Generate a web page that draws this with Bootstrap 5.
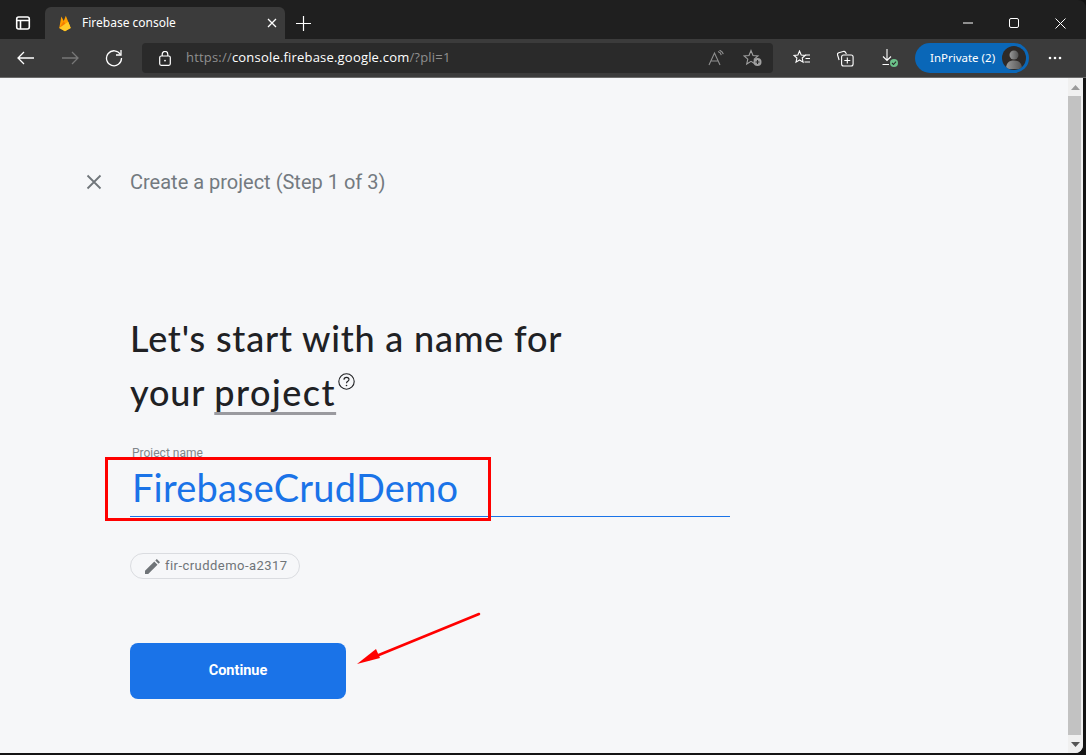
<!DOCTYPE html>
<html lang="en"><head><meta charset="utf-8"><title>Firebase console</title>
<link href="https://cdn.jsdelivr.net/npm/bootstrap@5.3.0/dist/css/bootstrap.min.css" rel="stylesheet">
<style>
html,body{height:755px;overflow:hidden;margin:0;background:#141414}
.win{width:1086px;height:755px;position:relative;overflow:hidden;font-family:"Noto Sans",sans-serif}
.tabrow{height:39px;background:#1f1f1f;padding-top:7px;border-top-right-radius:8px}
.tabicon{width:45px;height:32px;background:#1f1f1f}
.browsertab{width:240px;height:32px;background:#3b3b3b;border-radius:6px 6px 0 0;color:#fff;font-size:12px;padding:0 8px 0 12px}
.browsertab span{margin-left:9px;margin-top:-1px}
.newtab{width:36px;height:32px}
.winbtns{margin-left:auto;padding-right:3px;height:32px}
.winbtn{width:46px;height:32px}
.toolbar{background:#3b3b3b;border-bottom:1px solid #6b6b6b;box-sizing:content-box;padding:4px 0 0 0;height:34px}
.navbtn{width:44px;height:30px;flex:none}
.addr{width:631px;height:30px;background:#2a2a2a;border-radius:4px;flex:none;font-family:"Open Sans",sans-serif;font-size:13px;color:#8f8f8f;margin-left:6px;padding:0 10px 0 17px}
.addr b{font-weight:400;color:#fff}
.urltxt{margin-left:15px;letter-spacing:.015em}
.tool{width:44px;height:30px;flex:none}
.firsttool{margin-left:7px}
.privpill{width:114px;height:30px;background:#0a67b8;border-radius:15px;color:#fff;font-size:11.5px;padding:0 3px 0 15px;flex:none;margin-left:3px}
.ava{width:24px;height:24px;border-radius:50%;background:#2e2a28;margin-left:auto;overflow:hidden}
.pagewrap{height:675px;background:#f6f7f9;border-radius:0 0 8px 0;margin-right:3px}
.pagemain{flex:1;padding:0 0 0 130px;font-family:Roboto,sans-serif;position:relative}
.sbar{width:15px;background:#f0f0f0;flex:none;border-bottom-right-radius:8px}
.sthumb{flex:1;background:#c2c2c2;margin:0 2px 0 0}
.sarrow{height:18px;flex:none}
.steprow{height:22px;margin-top:93px;color:#737a80;font-size:20px;line-height:22px}
.closex{position:absolute;left:86px;top:96px}
.headline{margin:118px 0 0;font-family:Lato,sans-serif;font-weight:500;font-size:36px;line-height:54px;color:#202124;width:480px;letter-spacing:.8px}
.headline .hline{display:block}
.headline u{letter-spacing:1.5px;text-decoration:underline;text-decoration-color:#9a9a9f;text-decoration-thickness:3px;text-underline-offset:6px;text-decoration-skip-ink:none}
.headline svg{vertical-align:16px;margin-left:2px}
.fieldlabel{font-size:12px;color:#80868b;line-height:14px;margin-top:27px;padding-left:2px}
.fieldval{width:600px;height:57px;border-bottom:1px solid #1a73e8;color:#1a73e8;font-family:Lato,sans-serif;font-size:38px;line-height:44px;padding:5px 0 0 2px;letter-spacing:.2px}
.idchip{display:inline-flex;align-items:center;height:26px;border:1px solid #dadce0;border-radius:13px;margin-top:36px;padding:0 11px 0 14px;font-size:13px;font-weight:400;color:#6f7478;letter-spacing:.035em}
.idchip span{margin-left:5px}
.gobtn{display:block;width:216px;height:56px;background:#1a73e8;border:0;border-radius:8px;color:#fff;font-size:14.5px;font-weight:700;margin-top:62px}
.gobtn:hover{background:#1a73e8;color:#fff}
.redbox{position:absolute;left:105px;top:379px;width:386px;height:64px;border:3px solid #f00;pointer-events:none}
.arrow{position:absolute;left:353px;top:533px}
</style></head><body>
<div class="win">
<div class="tabrow d-flex">
 <div class="tabicon d-flex align-items-center justify-content-center"><svg width="16" height="16" viewBox="0 0 16 16" fill="none" stroke="#fff" stroke-width="1.6"><rect x="1.7" y="2" width="12.600" height="12" rx="2"/><path d="M1.700 5.500h12.600M5.500 5.500V14"/></svg></div>
 <div class="browsertab d-flex align-items-center">
  <svg width="16" height="18" viewBox="0 0 16 22"><path d="M1 17 3.500 3 6.500 8.500 9 2 15 17 8 21Z" fill="#ffa000"/><path d="M1 17 6.500 8.500 9 13Z" fill="#f57c00"/><path d="M1 17 12 9.500 15 17 8 21Z" fill="#ffca28"/></svg>
  <span>Firebase console</span>
  <svg class="ms-auto" width="10" height="10" viewBox="0 0 10 10" stroke="#fff" stroke-width="1.300"><path d="M1 1l8 8M9 1l-8 8"/></svg>
 </div>
 <div class="newtab d-flex align-items-center justify-content-center"><svg width="15" height="15" viewBox="0 0 15 15" stroke="#fff" stroke-width="1.200"><path d="M7.500 0v15M0 7.500h15"/></svg></div>
 <div class="winbtns d-flex">
  <div class="winbtn d-flex align-items-center justify-content-center"><svg width="10" height="2" viewBox="0 0 10 2" stroke="#fff"><path d="M0 1h10"/></svg></div>
  <div class="winbtn d-flex align-items-center justify-content-center"><svg width="10" height="10" viewBox="0 0 10 10" fill="none" stroke="#fff"><rect x=".5" y=".5" width="9" height="9" rx="1.500"/></svg></div>
  <div class="winbtn d-flex align-items-center justify-content-center"><svg width="11" height="11" viewBox="0 0 11 11" stroke="#fff"><path d="M.5.5l10 10M10.500.5l-10 10"/></svg></div>
 </div>
</div>
<div class="toolbar d-flex">
 <div class="navbtn d-flex align-items-center justify-content-center ms-1"><svg width="18" height="14" viewBox="0 0 18 14" fill="none" stroke="#fff" stroke-width="1.300"><path d="M17 7H1M7 1 1 7l6 6"/></svg></div>
 <div class="navbtn d-flex align-items-center justify-content-center"><svg width="18" height="14" viewBox="0 0 18 14" fill="none" stroke="#777" stroke-width="1.300"><path d="M1 7h16M11 1l6 6-6 6"/></svg></div>
 <div class="navbtn d-flex align-items-center justify-content-center"><svg width="18" height="18" viewBox="0 0 18 18" fill="none" stroke="#fff" stroke-width="1.300"><path d="M15.500 5.500A7.500 7.500 0 1 0 16.500 9"/><path d="M16 1v5h-5"/></svg></div>
 <div class="addr d-flex align-items-center">
  <svg width="12" height="15" viewBox="0 0 12 15" fill="none" stroke="#fff" stroke-width="1.200"><rect x=".7" y="5" width="10.600" height="9.300" rx="1.500"/><path d="M3.200 5V3.200a2.800 2.800 0 0 1 5.600 0V5"/><circle cx="6" cy="9.600" r=".9" fill="#fff" stroke="none"/></svg>
  <span class="urltxt">https://<b>console.firebase.google.com</b>/?pli=1</span>
  <svg class="ms-auto" width="16" height="16" viewBox="0 0 16 16" fill="none" stroke="#8f8f8f" stroke-width="1.100"><path d="M1 15 6.500 3 12 15M3 11h7M10 1.500c2 .7 3 2 3.300 3.600M11.500.2c2 .7 3.400 2.300 3.800 4"/></svg>
  <svg style="margin-left:19px" width="20" height="18" viewBox="0 0 20 18" fill="none" stroke="#a0a0a0" stroke-width="1.100"><path d="M8 1.500 10 6.500l5 .4-3.800 3.300L12.300 15 8 12.400 3.700 15l1.100-4.800L1 6.900l5-.4Z"/><circle cx="14.500" cy="13" r="4" fill="#a0a0a0" stroke="none"/><path d="M14.500 11v4M12.500 13h4" stroke="#2a2a2a"/></svg>
 </div>
 <div class="tool firsttool d-flex align-items-center justify-content-center"><svg width="18" height="16" viewBox="0 0 18 16" fill="none" stroke="#fff" stroke-width="1.100"><path d="M6.500 1 8.200 5l4 .4-3 2.600.9 4.200-3.600-2.200L3 12.200 3.900 8 .9 5.400 4.900 5Z"/><path d="M12 5h5M12.500 8.500h4.500M11.500 12h5.500"/></svg></div>
 <div class="tool d-flex align-items-center justify-content-center"><svg width="18" height="17" viewBox="0.900 0 18 17" fill="none" stroke="#fff" stroke-width="1.100"><path d="M3 10 1.500 5c-.3-1 .2-2 1.200-2.300L7 1.500c1-.3 2 .1 2.500 1l.8 1.500"/><rect x="5.500" y="5" width="11.500" height="11" rx="2"/><path d="M11.200 7.500v6M8.200 10.500h6"/></svg></div>
 <div class="tool d-flex align-items-center justify-content-center"><svg width="18" height="18" viewBox="0 0 18 18" fill="none" stroke="#fff" stroke-width="1.100"><path d="M6 0v11M2 7.500 6 11.500l4-4M1.500 15.500H8"/><circle cx="13" cy="14" r="4" fill="#6cc28a" stroke="none"/><path d="M11 14l1.500 1.500 2.500-2.800" stroke="#2a2a2a"/></svg></div>
 <div class="privpill d-flex align-items-center"><span>InPrivate (2)</span><div class="ava"><svg width="24" height="24" viewBox="0 0 24 24" class="d-block"><defs><linearGradient id="g1"><stop offset="0" stop-color="#999"/><stop offset="1" stop-color="#555"/></linearGradient></defs><circle cx="12" cy="9" r="4.500" fill="url(#g1)"/><path d="M4 23c0-6 3-8.500 8-8.500s8 2.500 8 8.500z" fill="url(#g1)"/></svg></div></div>
 <div class="tool ms-1 d-flex align-items-center justify-content-center"><svg width="14" height="4" viewBox="0 0 14 4" fill="#fff"><circle cx="2" cy="2" r="1.300"/><circle cx="7" cy="2" r="1.300"/><circle cx="12" cy="2" r="1.300"/></svg></div>
</div>
<div class="pagewrap d-flex">
 <div class="pagemain">
  <svg class="closex" width="16" height="16" viewBox="0 0 16 16" stroke="#70767b" stroke-width="1.800"><path d="M1.500 1.500l13 13M14.500 1.500l-13 13"/></svg>
  <div class="steprow">Create a project (Step 1 of 3)</div>
  <h1 class="headline"><span class="hline">Let's start with a name for</span><span class="hline">your <u>project</u><svg width="17" height="17" viewBox="0 0 17 17" fill="none" stroke="#202124" stroke-width="1.100"><circle cx="8.500" cy="8.500" r="7.700"/><path d="M6 6.700c0-1.500 1.100-2.300 2.500-2.300s2.500.8 2.500 2.100c0 1.900-2.500 1.700-2.500 3.700"/><circle cx="8.500" cy="12.500" r=".8" fill="#202124" stroke="none"/></svg></span></h1>
  <div class="fieldlabel">Project name</div>
  <div class="fieldval">FirebaseCrudDemo</div>
  <div class="idchip"><svg width="15" height="15" viewBox="0 0 15 15" fill="#6f7478"><path d="M0 15v-3.200L9.300 2.500l3.200 3.200L3.200 15zM10.300 1.500 11.800 0 15 3.200l-1.500 1.500z"/></svg><span>fir-cruddemo-a2317</span></div>
  <button type="button" class="btn gobtn">Continue</button>
  <div class="redbox"></div>
  <svg class="arrow" width="130" height="55" viewBox="0 0 130 55"><path d="M126 3 16 48" stroke="#f00" stroke-width="2.500" stroke-linecap="round"/><path d="M4 55 23 40 27 49Z" fill="#f00" transform="translate(0 -2)"/></svg>
 </div>
 <div class="sbar d-flex flex-column">
  <div class="sarrow d-flex align-items-center justify-content-center"><svg width="9" height="5" viewBox="0 0 9 5" fill="#9a9a9a"><path d="M4.500 0 9 5H0z"/></svg></div>
  <div class="sthumb"></div>
  <div class="sarrow d-flex align-items-center justify-content-center"><svg width="9" height="5" viewBox="0 0 9 5" fill="#555"><path d="M4.500 5 9 0H0z"/></svg></div>
 </div>
</div>
</div>
<script src="https://cdn.jsdelivr.net/npm/bootstrap@5.3.0/dist/js/bootstrap.bundle.min.js"></script>
</body></html>
